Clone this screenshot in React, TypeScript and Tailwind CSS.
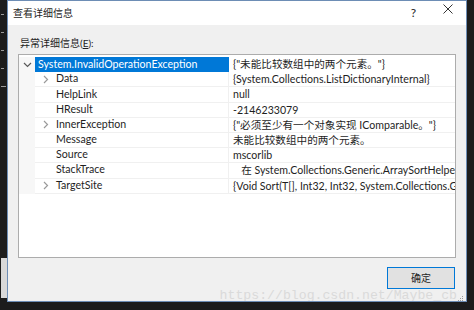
const rows = [
	{ name: "Data", value: "{System.Collections.ListDictionaryInternal}", expand: true },
	{ name: "HelpLink", value: "null", expand: false },
	{ name: "HResult", value: "-2146233079", expand: false },
	{ name: "InnerException", value: "{\"必须至少有一个对象实现 IComparable。\"}", expand: true },
	{ name: "Message", value: "未能比较数组中的两个元素。", expand: false },
	{ name: "Source", value: "mscorlib", expand: false },
	{ name: "StackTrace", value: "\u00a0\u00a0\u00a0在 System.Collections.Generic.ArraySortHelper`1.Sort", expand: false },
	{ name: "TargetSite", value: "{Void Sort(T[], Int32, Int32, System.Collections.Generic.IComparer`1[T])}", expand: true }
]

const Chevron = ({ down = false }: { down?: boolean }) => (
	<svg width="9" height="9" viewBox="0 0 9 9" className="shrink-0">
		{down ? (
			<path d="M1 3 L4.5 6.5 L8 3" fill="none" stroke="#5a5a5a" strokeWidth="1.2" />
		) : (
			<path d="M3 1 L6.5 4.5 L3 8" fill="none" stroke="#9a9a9a" strokeWidth="1.2" />
		)}
	</svg>
)

const App = () => {
	return (
		<div
			className="w-[474px] h-[310px] bg-[#1c1c1c] flex flex-col overflow-hidden text-[10.6px] text-[#1e1e1e]"
			style={{ fontFamily: '"Lato", "Noto Sans CJK SC", sans-serif' }}
		>
			<div className="flex h-[302px]">
				<div className="w-[7px] shrink-0 flex flex-col gap-[17px] pt-[14px] pl-[1px]">
					<div className="w-[3px] h-[1px] bg-[#9a9a9a]" />
					<div className="w-[3px] h-[1px] bg-[#9a9a9a]" />
					<div className="w-[3px] h-[1px] bg-[#9a9a9a]" />
					<div className="w-[3px] h-[1px] bg-[#9a9a9a]" />
					<div className="w-[5px] h-[1px] bg-[#9a9a9a]" />
					<div className="mt-auto mb-[4px] w-[6px] h-[40px] bg-[#d8d8d8]" />
				</div>
				<div className="flex-1 min-w-0 overflow-hidden flex flex-col border border-[#6d8db5] bg-[#f0f0f0]">
					<div className="h-[24px] bg-white flex items-center pl-[5px]">
						<span className="text-[10px]">查看详细信息</span>
						<div className="ml-auto flex">
							<div className="w-[36px] flex justify-center text-[12px] pl-[3px]">?</div>
							<div className="w-[36px] flex justify-center">
								<svg width="10" height="10" viewBox="0 0 10 10">
									<path d="M0.5 0.5 L9.5 9.5 M9.5 0.5 L0.5 9.5" stroke="#333" strokeWidth="1" />
								</svg>
							</div>
						</div>
					</div>
					<div className="flex-1 min-h-0 flex flex-col px-[10px] pt-[11px]">
						<div className="h-[14px] leading-[14px] pl-[2px] text-[10px]">
							异常详细信息(<span className="underline">E</span>):
						</div>
						<div className="mt-[4px] h-[204px] shrink-0 border border-[#acacac] bg-white pt-[2px] flex flex-col overflow-hidden">
							<div className="flex h-[15.2px] items-center">
								<div className="w-[16px] shrink-0 flex justify-center bg-[#f7f7f7] h-full items-center">
									<Chevron down />
								</div>
								<div className="w-[194px] shrink-0 h-full bg-[#0078d7] text-white pl-[3px] leading-[15px] whitespace-nowrap overflow-hidden">
									System.InvalidOperationException
								</div>
								<div className="flex-1 min-w-0 h-full pl-[4px] leading-[15px] whitespace-nowrap overflow-hidden">
									{"{\"未能比较数组中的两个元素。\"}"}
								</div>
							</div>
							{rows.map((r) => (
								<div key={r.name} className="flex h-[15.2px] items-center">
									<div className="w-[16px] shrink-0 h-full bg-[#f7f7f7]" />
									<div className="w-[194px] shrink-0 h-full flex items-center border-b border-[#f0f0f0] border-r">
										<div className="w-[21px] shrink-0 flex justify-center">
											{r.expand && <Chevron />}
										</div>
										<span className="whitespace-nowrap">{r.name}</span>
									</div>
									<div className="flex-1 min-w-0 h-full pl-[4px] leading-[15px] whitespace-nowrap overflow-hidden border-b border-[#f0f0f0]">
										{r.value}
									</div>
								</div>
							))}
						</div>
						<div className="flex justify-end mt-[9px] pr-[1px]">
							<div className="w-[68px] h-[22px] border border-[#0078d7] bg-[#e1e1e1] flex items-center justify-center text-[10px]">
								确定
							</div>
						</div>
						<div className="flex items-end justify-end mt-auto mb-[1px] -mr-[8px]">
							<span
								className="text-[13.2px] leading-[14px] text-[#dadada] whitespace-nowrap"
								style={{ fontFamily: '"Liberation Mono", monospace' }}
							>
								https://blog.csdn.net/Maybe_cb
							</span>
							<svg width="6" height="6" viewBox="0 0 6 6" className="mb-[1px] ml-[1px] shrink-0">
								<rect x="4" y="0" width="1" height="1" fill="#9a9a9a" />
								<rect x="2" y="2" width="1" height="1" fill="#9a9a9a" />
								<rect x="4" y="2" width="1" height="1" fill="#9a9a9a" />
								<rect x="0" y="4" width="1" height="1" fill="#9a9a9a" />
								<rect x="2" y="4" width="1" height="1" fill="#9a9a9a" />
								<rect x="4" y="4" width="1" height="1" fill="#9a9a9a" />
							</svg>
						</div>
					</div>
				</div>
				<div className="w-[7px] shrink-0" />
			</div>
			<div className="h-[8px]" />
		</div>
	)
}

export default App
